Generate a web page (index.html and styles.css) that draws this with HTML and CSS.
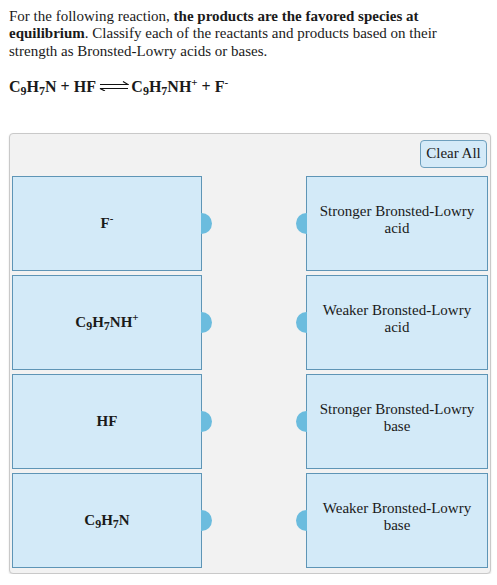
FILE: index.html
```html
<!DOCTYPE html>
<html lang="en">
<head>
  <meta charset="UTF-8" />
  <meta name="viewport" content="width=device-width, initial-scale=1.0" />
  <title>Bronsted-Lowry Classification</title>
  <link rel="stylesheet" href="styles.css">
</head>
<body>

  <div class="question">
    <p class="prompt">For the following reaction, <strong>the products are the favored species at equilibrium</strong>. Classify each of the reactants and products based on their strength as Bronsted-Lowry acids or bases.</p>
    <p class="equation">
      C<sub>9</sub>H<sub>7</sub>N + HF
      <svg class="eq-arrow" width="30" height="10" viewBox="0 0 30 10">
        <path d="M1 3.5 H29 L24 0.5" fill="none" stroke="#111" stroke-width="1.2" />
        <path d="M29 7.5 H1 L6 10" fill="none" stroke="#111" stroke-width="1.2" />
      </svg>
      C<sub>9</sub>H<sub>7</sub>NH<sup>+</sup> + F<sup>-</sup>
    </p>
  </div>

  <div class="matcher">
    <div class="toolbar">
      <button class="clear-btn">Clear All</button>
    </div>
    <div class="pairs">
      <div class="item left"><strong>F<sup>-</sup></strong></div>
      <div class="slot right">Stronger Bronsted-Lowry acid</div>

      <div class="item left"><strong>C<sub>9</sub>H<sub>7</sub>NH<sup>+</sup></strong></div>
      <div class="slot right">Weaker Bronsted-Lowry acid</div>

      <div class="item left"><strong>HF</strong></div>
      <div class="slot right">Stronger Bronsted-Lowry base</div>

      <div class="item left"><strong>C<sub>9</sub>H<sub>7</sub>N</strong></div>
      <div class="slot right">Weaker Bronsted-Lowry base</div>
    </div>
  </div>

</body>
</html>
```

FILE: styles.css
```css
* {
  box-sizing: border-box;
}

body {
  margin: 0;
  padding: 8px 6px 0 9px;
  font-family: 'Liberation Serif', 'Times New Roman', serif;
  font-size: 15px;
  color: #1a1a1a;
  background: #fff;
}

.prompt {
  margin: 0;
  max-width: 440px;
  line-height: 17.3px;
}

.equation {
  margin: 18px 0 0;
  font-weight: bold;
  font-size: 16px;
  line-height: 18px;
}

.equation sub,
.item sub {
  font-size: 12px;
  vertical-align: -3px;
  line-height: 0;
}

.equation sup,
.item sup {
  font-size: 11px;
  vertical-align: 6px;
  line-height: 0;
}

.eq-arrow {
  vertical-align: 1px;
  margin: 0 -2px 0 0;
}

.matcher {
  margin-top: 37px;
  width: 482px;
  background: #f2f2f2;
  border: 1px solid #c9c9c9;
  border-radius: 4px;
  box-shadow: 0 1px 2px rgba(0, 0, 0, 0.12);
  padding: 6px 2px 5px 2px;
}

.toolbar {
  display: flex;
  justify-content: flex-end;
  margin-bottom: 8px;
  padding-right: 1px;
}

.clear-btn {
  font-family: 'Liberation Serif', 'Times New Roman', serif;
  font-size: 15px;
  color: #1a1a1a;
  background: #d4eaf8;
  border: 1px solid #6d9fbd;
  border-radius: 4px;
  width: 67px;
  height: 28px;
  padding: 0;
  cursor: pointer;
}

.pairs {
  display: grid;
  grid-template-columns: 190px 182px;
  justify-content: space-between;
  row-gap: 4px;
}

.item,
.slot {
  position: relative;
  height: 95px;
  background: #d3eaf8;
  border: 1px solid #5e95b6;
  display: flex;
  align-items: center;
  justify-content: center;
  text-align: center;
  line-height: 17px;
  padding: 0 10px;
}

.slot {
  padding-bottom: 6px;
}

/* connector nubs on the facing edges */
.item::after,
.slot::before {
  content: '';
  position: absolute;
  top: 50%;
  width: 11px;
  height: 21px;
  margin-top: -10px;
  background: #6bbcde;
}

.item::after {
  left: 100%;
  border-radius: 0 11px 11px 0;
}

.slot::before {
  right: 100%;
  border-radius: 11px 0 0 11px;
}
```
